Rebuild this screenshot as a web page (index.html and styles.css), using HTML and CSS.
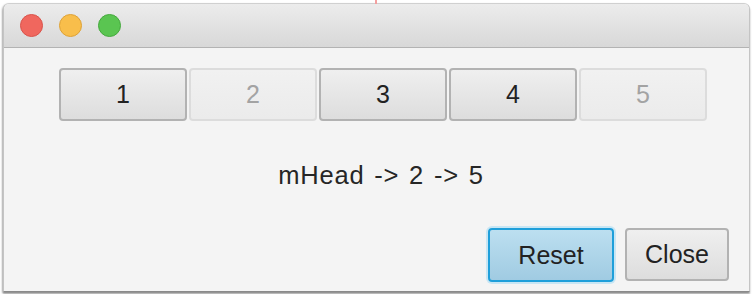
FILE: index.html
```html
<!DOCTYPE html>
<html>
<head>
<meta charset="utf-8">
<link rel="stylesheet" href="styles.css">
</head>
<body>
<div class="mark"></div>
<div class="window">
  <div class="titlebar">
    <span class="light red"></span>
    <span class="light yellow"></span>
    <span class="light green"></span>
  </div>
  <div class="content">
    <div class="row">
      <button class="btn">1</button>
      <button class="btn disabled">2</button>
      <button class="btn">3</button>
      <button class="btn">4</button>
      <button class="btn disabled">5</button>
    </div>
    <div class="label">mHead -&gt; 2 -&gt; 5</div>
    <div class="actions">
      <button class="btn default">Reset</button>
      <button class="btn close">Close</button>
    </div>
  </div>
</div>
</body>
</html>
```
FILE: styles.css
```css
html, body {
  margin: 0;
  padding: 0;
  background: #ffffff;
  width: 754px;
  height: 294px;
  overflow: hidden;
  font-family: "Liberation Sans", Arial, sans-serif;
}
.mark {
  position: absolute;
  left: 375px;
  top: 0;
  width: 2px;
  height: 4px;
  background: #f3a0a0;
}
.window {
  margin: 3px 0 0 3px;
  width: 747px;
  height: 289px;
  box-sizing: border-box;
  border: 1px solid #c4c4c4;
  border-top-color: #d0d0d0;
  border-bottom: 1px solid #8a8a8a;
  border-radius: 6px 6px 0 0;
  background: #f4f4f4;
  box-shadow: -1px 1px 2px rgba(0,0,0,0.25), 0 2px 2px rgba(0,0,0,0.3);
  display: flex;
  flex-direction: column;
  overflow: hidden;
}
.titlebar {
  height: 43px;
  flex: none;
  background: linear-gradient(#ececec, #d8d8d8);
  border-bottom: 1px solid #b3b3b3;
  display: flex;
  align-items: center;
  gap: 16px;
  padding-left: 16px;
  box-sizing: content-box;
}
.light {
  width: 23px;
  height: 23px;
  border-radius: 50%;
  box-sizing: border-box;
}
.red { background: #f0675e; border: 1px solid #d9534b; }
.yellow { background: #f8be4b; border: 1px solid #dea237; }
.green { background: #5ac551; border: 1px solid #45a93d; }
.content {
  flex: 1;
  display: flex;
  flex-direction: column;
}
.row {
  display: flex;
  gap: 2px;
  margin: 20px 0 0 55px;
}
.btn {
  font-family: "Liberation Sans", Arial, sans-serif;
  font-size: 25px;
  color: #222222;
  width: 128px;
  height: 53px;
  box-sizing: border-box;
  border: 2px solid #b2b2b2;
  border-radius: 4px;
  background: linear-gradient(#efefef, #dddddd);
  padding: 0;
  margin: 0;
  display: flex;
  align-items: center;
  justify-content: center;
}
.btn.disabled {
  color: #a3a3a3;
  border-color: #dcdcdc;
  background: linear-gradient(#f1f1f1, #ebebeb);
}
.label {
  text-align: center;
  font-size: 25.5px;
  color: #262626;
  letter-spacing: 0.8px;
  word-spacing: 2px;
  margin: 40px 0 0 9px;
  line-height: 28px;
}
.actions {
  display: flex;
  justify-content: flex-end;
  gap: 11px;
  margin: 39px 20px 0 0;
}
.btn.default {
  width: 126px;
  height: 54px;
  border: 2px solid #1f9fda;
  background: linear-gradient(#bcdff0, #a0cbe2);
  box-shadow: 0 0 0 2px #c8e6f4;
}
.btn.close {
  width: 104px;
  height: 53px;
}
```
